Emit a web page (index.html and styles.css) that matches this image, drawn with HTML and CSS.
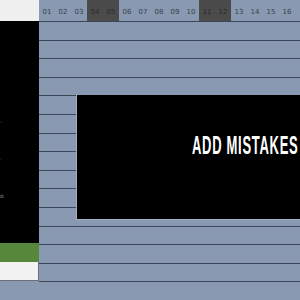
FILE: index.html
```html
<!DOCTYPE html>
<html lang="en">
<head>
  <meta charset="UTF-8">
  <title>Timeline</title>
  <link rel="stylesheet" href="styles.css">
</head>
<body>
  <div class="app">
    <div class="side">
      <div class="side-top"></div>
      <div class="side-black">
        <span class="cut">·</span>
        <span class="cut">·</span>
        <span class="cut">o</span>
      </div>
      <div class="side-green"></div>
      <div class="side-white"></div>
    </div>

    <div class="main">
      <div class="header">
        <div class="cell">01</div>
        <div class="cell">02</div>
        <div class="cell">03</div>
        <div class="cell on">04</div>
        <div class="cell on">05</div>
        <div class="cell">06</div>
        <div class="cell">07</div>
        <div class="cell">08</div>
        <div class="cell">09</div>
        <div class="cell">10</div>
        <div class="cell on">11</div>
        <div class="cell on">12</div>
        <div class="cell">13</div>
        <div class="cell">14</div>
        <div class="cell">15</div>
        <div class="cell">16</div>
      </div>
      <div class="rows">
        <div class="row"></div><div class="row"></div><div class="row"></div>
        <div class="row"></div><div class="row"></div><div class="row"></div>
        <div class="row"></div><div class="row"></div><div class="row"></div>
        <div class="row"></div><div class="row"></div><div class="row"></div>
        <div class="row"></div><div class="row"></div>
      </div>

      <div class="preview">
        <span class="title">ADD MISTAKES</span>
      </div>
    </div>
  </div>
</body>
</html>
```

FILE: styles.css
```css
body { margin: 0; background: #8899b1; font-family: "DejaVu Sans", sans-serif; overflow: hidden; }
.app { display: flex; width: 300px; height: 300px; }

.side { width: 39px; flex: none; display: flex; flex-direction: column; }
.side-top { height: 21px; background: #efefef; }
.side-black { height: 222px; background: #000; display: flex; flex-direction: column; gap: 27px; padding-top: 96px; box-sizing: border-box; }
.cut { font-size: 6px; color: #8a8a8a; line-height: 10px; }
.side-green { height: 19px; background: #56873a; }
.side-white { height: 18px; background: #f2f2f2; border-right: 1px solid #6b6f76; border-bottom: 1px solid #6b6f76; }

.main { flex: 1; position: relative; }
.header { display: grid; grid-template-columns: repeat(16, 16px); height: 21px; border-bottom: 1px solid #3b4659; }
.cell { font-size: 7px; color: #38414f; display: flex; align-items: center; justify-content: center; padding-top: 3px; box-sizing: border-box; }
.cell.on { background: #4b4b4c; color: #2a2a2a; }

.row { height: 17.6px; border-bottom: 1px solid #3b4659; }

.preview { position: absolute; left: 37px; right: 0; top: 95px; height: 124px; background: #000; border-left: 1px solid #a4b0c2; border-bottom: 1px solid #a4b0c2; }
.title { position: absolute; left: 115px; top: 35px; font-family: "Liberation Sans", sans-serif; font-weight: bold; font-size: 26px; letter-spacing: 1.4px; color: #fff; white-space: nowrap; transform: scaleX(0.5); transform-origin: left top; }
```
